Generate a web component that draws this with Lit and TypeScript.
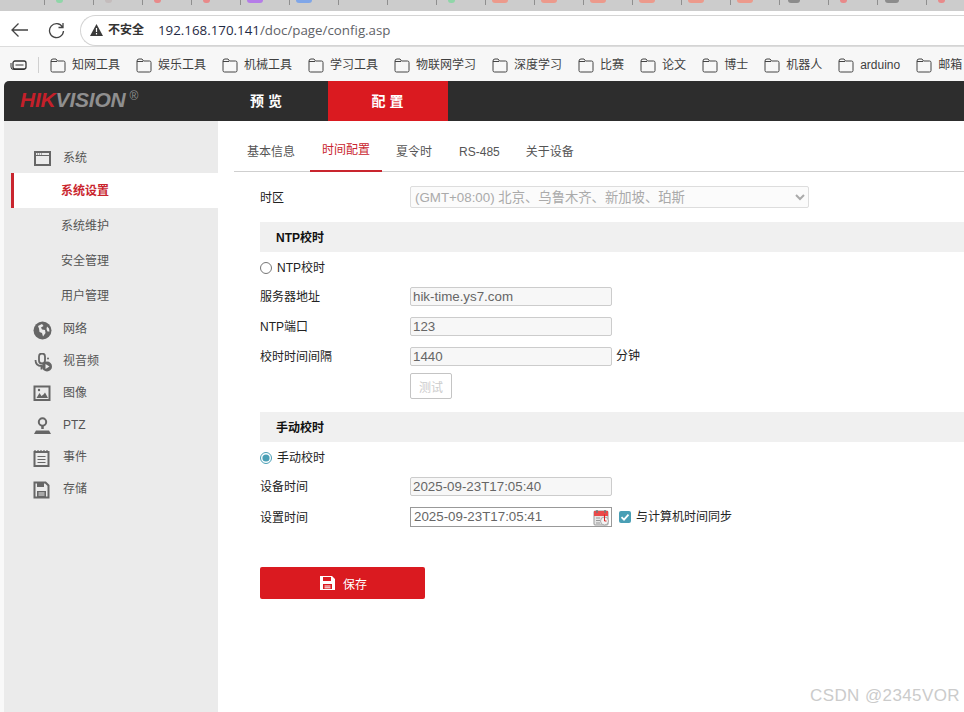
import { LitElement, css, html, svg } from "lit";
import { customElement } from "lit/decorators.js";

const tabDots = [
  ["#8fd6a8", 7], ["#c4bcbc", 7], ["#e88a8a", 7], ["#e88a8a", 7], ["#b57ce8", 16], ["#7fa6e8", 16],
  ["", 0], ["", 0], ["#8fd6a8", 7], ["#ec9a8c", 16], ["#ec9a8c", 16], ["#ec9a8c", 16], ["#ec9a8c", 16],
  ["#ec9a8c", 16], ["#ec9a8c", 16], ["#8c8c8c", 12], ["#e88a8a", 7], ["#8c8c8c", 14], ["#e88a8a", 7],
] as const;

const bookmarks = ["知网工具", "娱乐工具", "机械工具", "学习工具", "物联网学习", "深度学习", "比赛", "论文", "博士", "机器人", "arduino", "邮箱"];

const menuIcons: Record<string, unknown> = {
  system: svg`<rect x="2" y="2" width="15" height="13" fill="none" stroke="#666" stroke-width="2"/><path d="M2 5.5h15" stroke="#666" stroke-width="1"/><path d="M4 4h1M6 4h1M8 4h1" stroke="#666" stroke-width="1"/>`,
  net: svg`<circle cx="9.5" cy="9.5" r="9" fill="#666"/><path d="M5 5l4-2 1.500 2-2.500 1.500 1 2 3 .5 .5 3-2.500 3.500-1-3.500-2.500-1-.5-3.500zM14 5.500l2 2 .5 3-2 0-1-2.500z" fill="#ebebeb"/>`,
  av: svg`<rect x="6" y="0.500" width="6" height="10" rx="3" fill="none" stroke="#666" stroke-width="1.800"/><path d="M2.500 7c0 4 2 6 6 6v3.500" fill="none" stroke="#666" stroke-width="1.800"/><circle cx="15" cy="5.500" r="1" fill="#666"/><circle cx="14" cy="13.500" r="5" fill="#666"/><path d="M12.500 11v5l4-2.500z" fill="#ebebeb"/>`,
  image: svg`<rect x="1.500" y="1.500" width="15" height="13.500" fill="none" stroke="#666" stroke-width="2"/><path d="M3.500 13l3-5 2 3 2-1.500 1.500-2 3 5.500z" fill="#666"/><circle cx="6" cy="5" r="1.200" fill="#666"/>`,
  ptz: svg`<circle cx="9.500" cy="5" r="3.700" fill="none" stroke="#666" stroke-width="2"/><path d="M9.500 9v3" stroke="#666" stroke-width="2.500"/><path d="M1 17l2-3.500h13l2 3.500z" fill="#666"/>`,
  event: svg`<rect x="1.500" y="3" width="14" height="14" fill="none" stroke="#666" stroke-width="2"/><path d="M2 1v2M5 1v2M8 1v2M11 1v2M14 1v2" stroke="#666" stroke-width="1.200"/><path d="M4.500 7.500h8M4.500 10.500h8M4.500 13.500h8" stroke="#666" stroke-width="1.200"/>`,
  store: svg`<path d="M1.500 1.500h11l3 3v12h-14z" fill="none" stroke="#666" stroke-width="2"/><path d="M4 1.500h7v4.500h-7zM4 10h9v6.500h-9z" fill="#666"/><path d="M5.500 12h6M5.500 14h6" stroke="#ebebeb" stroke-width="1"/>`,
};

const menu = [
  { icon: "net", label: "网络" },
  { icon: "av", label: "视音频" },
  { icon: "image", label: "图像" },
  { icon: "ptz", label: "PTZ" },
  { icon: "event", label: "事件" },
  { icon: "store", label: "存储" },
];

@customElement("app-root")
export class AppRoot extends LitElement {
  static styles = css`
    :host {
      display: block;
      width: 964px;
      height: 712px;
      overflow: hidden;
      position: relative;
      background: #fff;
      font-family: "Liberation Sans", "Noto Sans CJK SC", sans-serif;
      font-size: 12px;
      line-height: 16px;
      color: #333;
    }
    .tabstrip {
      display: flex;
      height: 11px;
      padding-left: 44px;
      background: #cccccc;
      overflow: hidden;
    }
    .tabcell {
      flex: 0 0 49px;
      box-sizing: border-box;
      height: 5px;
      border-left: 1px solid #8f8f8f;
      display: flex;
      justify-content: center;
      padding-right: 20px;
    }
    .tabdot {
      height: 3px;
      border-radius: 0 0 4px 4px;
    }
    .toolbar {
      height: 36px;
      box-sizing: border-box;
      display: flex;
      align-items: center;
      padding: 3px 0 0 10px;
      background: #fff;
      border-bottom: 1px solid #dcdcdc;
    }
    .navicon {
      display: block;
    }
    .reload {
      margin-left: 19px;
    }
    .addr {
      flex: 1;
      height: 31px;
      margin: 0 0 0 15px;
      box-sizing: border-box;
      display: flex;
      align-items: center;
      padding-left: 9px;
      border: 1px solid #d4d4d4;
      border-right: none;
      border-radius: 16px 0 0 16px;
    }
    .secure {
      margin-left: 5px;
      width: 50px;
      font-weight: bold;
      color: #333;
    }
    .url {
      font-family: "Open Sans", sans-serif;
      font-size: 13.33px;
      color: #5f6368;
    }
    .url b {
      font-weight: normal;
      color: #1f2a44;
    }
    .bookmarks {
      height: 34px;
      box-sizing: border-box;
      display: flex;
      align-items: center;
      padding: 2px 0 0 10px;
      background: #f7f7f7;
      overflow: hidden;
      white-space: nowrap;
      color: #3f3f3f;
    }
    .bookmarks svg {
      flex: none;
    }
    .sep {
      flex: none;
      width: 1px;
      height: 16px;
      background: #d0d0d0;
      margin: 0 11px 0 10px;
    }
    .mark {
      display: flex;
      align-items: center;
      flex: none;
      gap: 6px;
      margin-right: 16px;
    }
    .page {
      display: flex;
      flex-direction: column;
      height: 631px;
      padding-left: 4px;
      background: linear-gradient(#f7f7f7, #f7f7f7) no-repeat left top / 100% 40px, #f9f9f9;
    }
    .header {
      height: 40px;
      flex: none;
      display: flex;
      background: #2d2d2d;
      border-radius: 5px 0 0 0;
    }
    .logo {
      width: 204px;
      box-sizing: border-box;
      padding: 11px 0 0 16px;
      font-size: 21px;
      font-weight: bold;
      font-style: italic;
      letter-spacing: -0.2px;
      color: #8f8f8f;
      white-space: nowrap;
    }
    .logo i {
      color: #c4202a;
    }
    .logo sup {
      font-size: 12px;
      font-style: normal;
      font-weight: normal;
      line-height: 0;
      margin-left: 4px;
      vertical-align: 7px;
    }
    .nav {
      width: 120px;
      box-sizing: border-box;
      display: flex;
      align-items: center;
      justify-content: center;
      color: #fff;
      font-size: 14px;
      font-weight: bold;
      letter-spacing: 4px;
    }
    .nav.on {
      padding-left: 3px;
      background: #da1a20;
    }
    .body {
      flex: 1;
      display: flex;
      min-height: 0;
      background: #fff;
    }
    .side {
      width: 214px;
      flex: none;
      box-sizing: border-box;
      padding-top: 20px;
      background: #ebebeb;
      color: #555;
    }
    .group {
      height: 32px;
      box-sizing: border-box;
      display: flex;
      align-items: center;
      padding: 2px 0 0 29px;
    }
    .group svg {
      width: 19px;
      height: 19px;
      margin: 2px 11px 0 0;
      flex: none;
    }
    .sub {
      height: 35px;
      margin-left: 7px;
      padding-left: 47px;
      border-left: 3px solid transparent;
      display: flex;
      align-items: center;
    }
    .sub.on {
      background: #fff;
      border-left-color: #c9252e;
      color: #c9252e;
      font-weight: bold;
    }
    .rest {
      margin-top: -1px;
    }
    .main {
      flex: 1;
      min-width: 0;
      padding-left: 16px;
    }
    .tabs {
      height: 51px;
      box-sizing: border-box;
      display: flex;
      gap: 1px;
      border-bottom: 1px solid #cfcfcf;
    }
    .tab {
      padding: 23px 13px 0;
      height: 51px;
      box-sizing: border-box;
      color: #555;
      white-space: nowrap;
    }
    .tab:last-child {
      margin-left: -1px;
    }
    .tab.on {
      margin-left: 1px;
      padding: 21px 12px 0;
      color: #c9252e;
      border-bottom: 2px solid #c9252e;
    }
    .form {
      padding: 14px 0 0 26px;
      color: #222;
    }
    .row {
      display: grid;
      grid-template-columns: 150px auto 1fr;
      align-items: center;
      height: 20px;
      margin-bottom: 10px;
    }
    .row > span:first-child {
      padding-top: 2px;
    }
    .zone {
      height: 22px;
      margin-bottom: 14px;
    }
    .set-row {
      margin-top: 11px;
    }
    select {
      width: 399px;
      height: 22px;
      box-sizing: border-box;
      border: 1px solid #ddd;
      border-radius: 2px;
      background: #fbfbfb;
      color: #aaa;
      font-family: inherit;
      opacity: 1;
    }
    .section {
      height: 30px;
      box-sizing: border-box;
      display: flex;
      align-items: center;
      padding: 2px 0 0 16px;
      background: #f0f0f0;
      font-weight: bold;
      color: #111;
    }
    .radio {
      height: 20px;
      display: flex;
      align-items: center;
      gap: 5px;
      margin: 6px 0 8px;
    }
    input[type="radio"] {
      width: 12px;
      height: 12px;
      margin: 0;
      accent-color: #4a9fb5;
    }
    .field {
      width: 202px;
      height: 19px;
      box-sizing: border-box;
      padding: 0 2px;
      border: 1px solid #ccc;
      border-radius: 2px;
      background: #f7f7f7;
      color: #666;
      font-family: inherit;
      font-size: 13.33px;
    }
    .unit {
      margin-left: 4px;
    }
    .test {
      display: block;
      width: 42px;
      height: 26px;
      margin: -3px 0 13px 150px;
      padding: 0;
      background: #fff;
      border: 1px solid #c4c4c4;
      border-radius: 2px;
      color: #ccc;
      font-family: inherit;
      font-size: 12px;
    }
    .picker {
      position: relative;
      width: 202px;
      height: 20px;
      box-sizing: border-box;
      display: flex;
      align-items: center;
      padding-left: 3px;
      border: 1px solid #999;
      background: #fff;
      color: #666;
      font-size: 13.33px;
    }
    .picker svg {
      position: absolute;
      right: 1px;
      top: 1px;
    }
    .sync {
      display: flex;
      align-items: center;
      gap: 5px;
      margin-left: 7px;
    }
    .sync svg {
      display: block;
    }
    .save {
      display: flex;
      align-items: center;
      justify-content: center;
      gap: 8px;
      width: 165px;
      height: 32px;
      margin-top: 40px;
      padding: 0 0 0 2px;
      border: none;
      border-radius: 2px;
      background: #da1a20;
      color: #fff;
      font-family: inherit;
      font-size: 12px;
    }
    .mark-water {
      position: absolute;
      right: 4px;
      bottom: 8px;
      font-size: 17px;
      letter-spacing: 0.4px;
      color: #cbcbcb;
    }
  `;

  private folder() {
    return html`<svg width="16" height="15" viewBox="0 0 16 15">
      <path d="M1 12.500V3a2 2 0 0 1 2-2h3l1.500 2H13.500a1.500 1.500 0 0 1 1.500 1.500v8a1.500 1.500 0 0 1-1.500 1.500h-11A1.500 1.500 0 0 1 1 12.500zM1 3.500h6" fill="none" stroke="#444" stroke-width="1"/>
    </svg>`;
  }

  render() {
    return html`
      <div class="tabstrip">
        ${tabDots.map(
          ([color, width]) => html`<div class="tabcell">
            <div class="tabdot" style="background:${color};width:${width}px"></div>
          </div>`,
        )}
      </div>
      <div class="toolbar">
        <svg class="navicon" width="19" height="16" viewBox="0 0 19 16">
          <path d="M18 8H2M8.500 1.500L2 8l6.500 6.500" fill="none" stroke="#444" stroke-width="1.300"/>
        </svg>
        <svg class="navicon reload" width="17" height="17" viewBox="0 0 17 17">
          <path d="M14.500 5A7 7 0 1 0 15.500 9M15 1v4.500h-4.500" fill="none" stroke="#444" stroke-width="1.300"/>
        </svg>
        <div class="addr">
          <svg width="13" height="12" viewBox="0 0 13 12">
            <path d="M6.500 0L13 12H0z" fill="#3a3a3a"/>
            <path d="M6.500 4v4M6.500 9v1.500" stroke="#fff" stroke-width="1.200"/>
          </svg>
          <span class="secure">不安全</span>
          <span class="url"><b>192.168.170.141</b>/doc/page/config.asp</span>
        </div>
      </div>
      <div class="bookmarks">
        <svg width="18" height="11" viewBox="0 0 18 11">
          <rect x="3" y="1" width="13" height="8" rx="2" fill="none" stroke="#333" stroke-width="1.300"/>
          <path d="M1 3v4a2.500 2.500 0 0 0 2.500 2.500h11M5.500 5h8" fill="none" stroke="#333" stroke-width="1"/>
        </svg>
        <div class="sep"></div>
        ${bookmarks.map((name) => html`<div class="mark">${this.folder()}<span>${name}</span></div>`)}
      </div>
      <div class="page">
        <div class="header">
          <div class="logo"><i>HIK</i>VISION<sup>®</sup></div>
          <div class="nav">预览</div>
          <div class="nav on">配置</div>
        </div>
        <div class="body">
          <div class="side">
            <div class="group"><svg viewBox="0 0 19 19">${menuIcons.system}</svg>系统</div>
            <div class="sub on">系统设置</div>
            <div class="sub">系统维护</div>
            <div class="sub">安全管理</div>
            <div class="sub">用户管理</div>
            <div class="rest">
              ${menu.map(
                (item) => html`<div class="group"><svg viewBox="0 0 19 19">${menuIcons[item.icon]}</svg>${item.label}</div>`,
              )}
            </div>
          </div>
          <div class="main">
            <div class="tabs">
              <div class="tab">基本信息</div>
              <div class="tab on">时间配置</div>
              <div class="tab">夏令时</div>
              <div class="tab">RS-485</div>
              <div class="tab">关于设备</div>
            </div>
            <div class="form">
              <div class="row zone">
                <span>时区</span>
                <select disabled><option>(GMT+08:00) 北京、乌鲁木齐、新加坡、珀斯</option></select>
              </div>
              <div class="section">NTP校时</div>
              <label class="radio"><input type="radio" name="mode" />NTP校时</label>
              <div class="row"><span>服务器地址</span><input class="field" disabled value="hik-time.ys7.com" /></div>
              <div class="row"><span>NTP端口</span><input class="field" disabled value="123" /></div>
              <div class="row">
                <span>校时时间间隔</span><input class="field" disabled value="1440" /><span class="unit">分钟</span>
              </div>
              <button class="test" disabled>测试</button>
              <div class="section">手动校时</div>
              <label class="radio"><input type="radio" name="mode" checked />手动校时</label>
              <div class="row"><span>设备时间</span><input class="field" disabled value="2025-09-23T17:05:40" /></div>
              <div class="row set-row">
                <span>设置时间</span>
                <div class="picker">
                  2025-09-23T17:05:41
                  <svg width="17" height="17" viewBox="0 0 17 17">
                    <rect x="1" y="2" width="14" height="14" rx="1" fill="#e6e6e6" stroke="#999"/>
                    <rect x="1" y="2" width="14" height="5" fill="#ea4a4a"/>
                    <path d="M4 1v3M12 1v3" stroke="#777" stroke-width="1.500"/>
                    <path d="M3 9h4M3 11.500h4M3 14h4" stroke="#999"/>
                    <circle cx="11.500" cy="12" r="4" fill="#f2f2f2" stroke="#aaa"/>
                    <path d="M11.500 5.500v6.500h2" fill="none" stroke="#d22" stroke-width="1"/>
                  </svg>
                </div>
                <div class="sync">
                  <svg width="12" height="12" viewBox="0 0 12 12">
                    <rect width="12" height="12" rx="2" fill="#4a9fb5"/>
                    <path d="M2.500 6.200l2.500 2.500 4.500-5" fill="none" stroke="#fff" stroke-width="1.800"/>
                  </svg>
                  与计算机时间同步
                </div>
              </div>
              <button class="save">
                <svg width="15" height="14" viewBox="0 0 15 14">
                  <path d="M0 0h12l3 3v11H0zM3 1v4h8V1zM3 8v5h9V8z" fill="#fff" fill-rule="evenodd"/>
                  <path d="M4.500 10h6M4.500 11.800h6" stroke="#fff" stroke-width="1"/>
                </svg>
                保存
              </button>
            </div>
          </div>
        </div>
      </div>
      <div class="mark-water">CSDN @2345VOR</div>
    `;
  }
}
